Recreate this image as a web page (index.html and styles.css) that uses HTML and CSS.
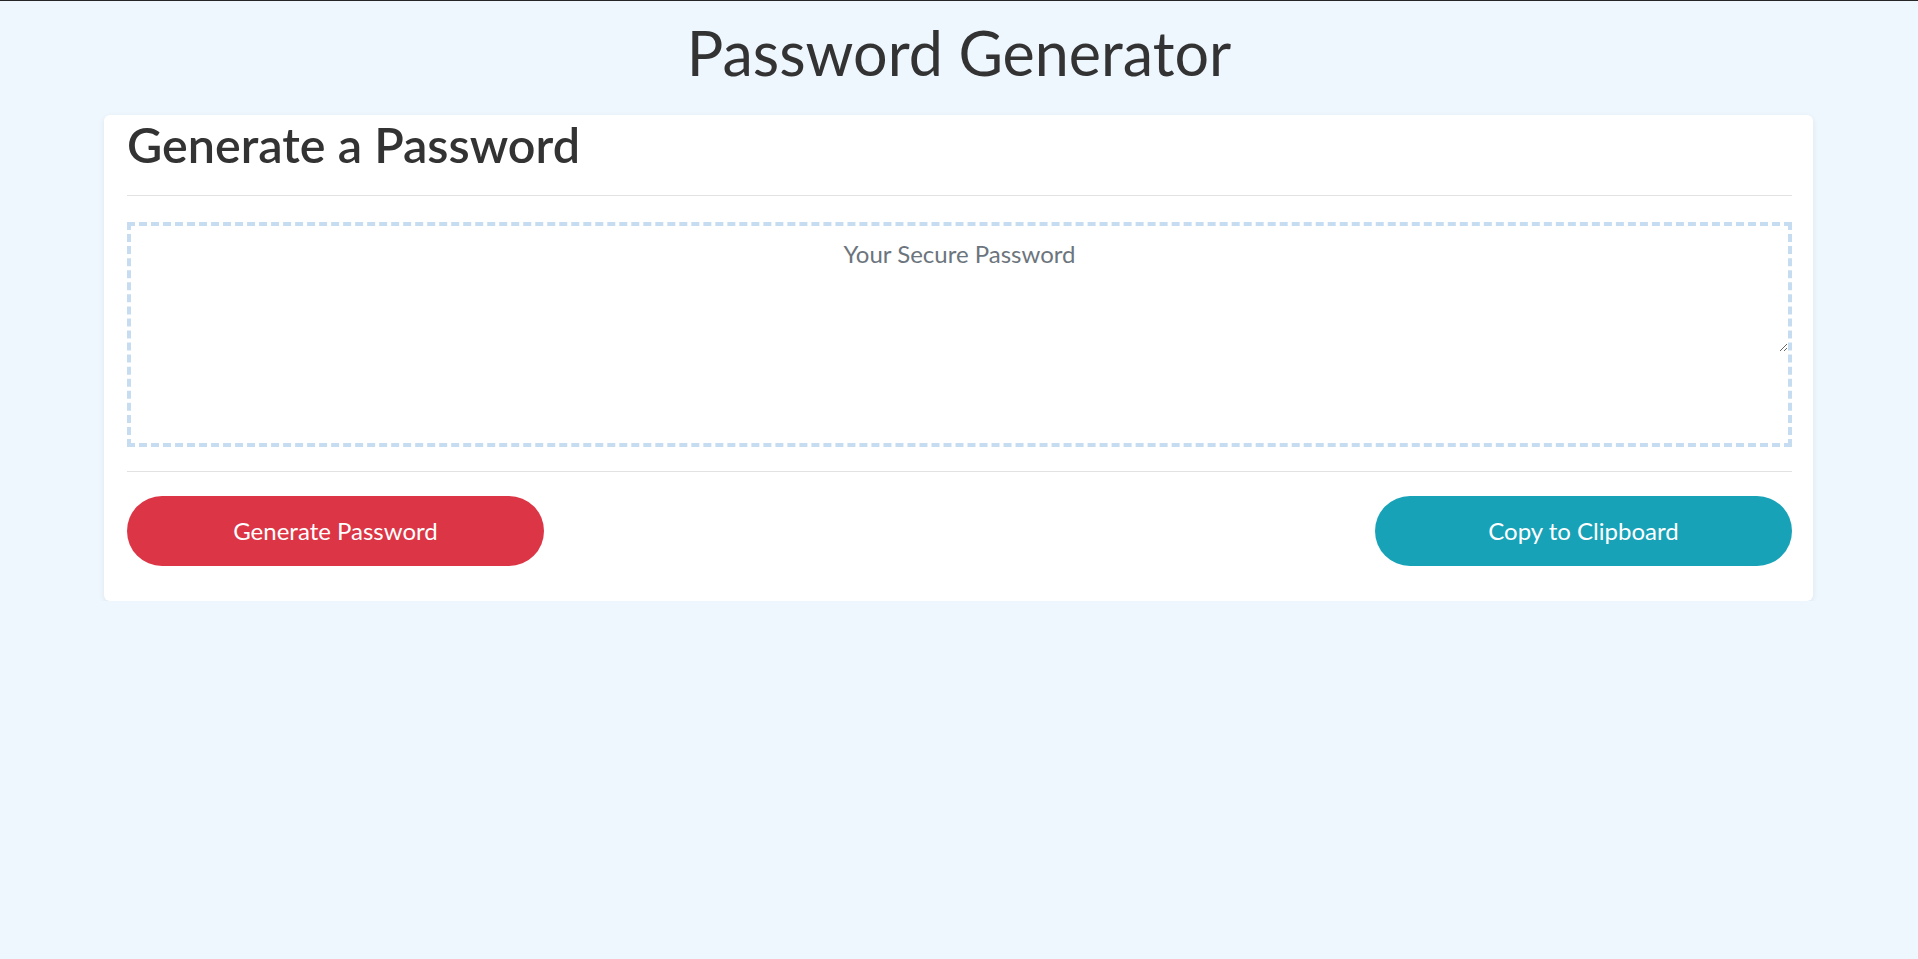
FILE: index.html
```html
<!DOCTYPE html>
<html lang="en">
<head>
<meta charset="utf-8">
<title>Password Generator</title>
<link rel="stylesheet" href="styles.css">
</head>
<body>
<h1 class="page-title">Password Generator</h1>
<div class="card">
  <div class="card-header">
    <h2 class="card-title">Generate a Password</h2>
  </div>
  <div class="card-body">
    <textarea class="password" placeholder="Your Secure Password" aria-label="Generated Password"></textarea>
  </div>
  <div class="card-footer">
    <button class="btn btn-generate" type="button">Generate Password</button>
    <button class="btn btn-copy" type="button">Copy to Clipboard</button>
  </div>
</div>
</body>
</html>
```

FILE: styles.css
```css
* { box-sizing: border-box; }
html, body { margin: 0; padding: 0; }
body {
  background: #eff7fe;
  border-top: 1px solid #262626;
  font-family: Lato, "Open Sans", sans-serif;
  color: #333;
}
.page-title {
  margin: 16px 0 26px;
  font-size: 61px;
  line-height: 72px;
  font-weight: 400;
  text-align: center;
  color: #333;
}
.card {
  margin: 0 105px 0 104px;
  background: #fff;
  border-radius: 6px;
  box-shadow: 0 2px 6px rgba(0, 0, 0, 0.07);
  padding: 0 21px 35px 23px;
}
.card-header {
  padding-bottom: 22px;
  border-bottom: 1px solid #e2e2e2;
}
.card-title {
  margin: 0;
  font-size: 48.5px;
  line-height: 58px;
  font-weight: 600;
  color: #333;
}
.card-body {
  margin: 26px 0 24px;
  height: 225px;
  border: 4px dashed #c6ddf1;
}
.password {
  display: block;
  width: 100%;
  height: 126px;
  border: none;
  outline: none;
  padding: 10px 12px;
  font-family: inherit;
  font-size: 24px;
  line-height: 36px;
  text-align: center;
  color: #333;
  background: transparent;
}
.password::placeholder { color: #6c757d; }
.card-footer {
  border-top: 1px solid #e2e2e2;
  padding-top: 24px;
  display: flex;
  justify-content: space-between;
}
.btn {
  width: 417px;
  height: 70px;
  border: none;
  border-radius: 35px;
  color: #fff;
  font-family: inherit;
  font-size: 24px;
  line-height: 1;
}
.btn-generate { background: #dc3545; }
.btn-copy { background: #17a2b8; }
```
